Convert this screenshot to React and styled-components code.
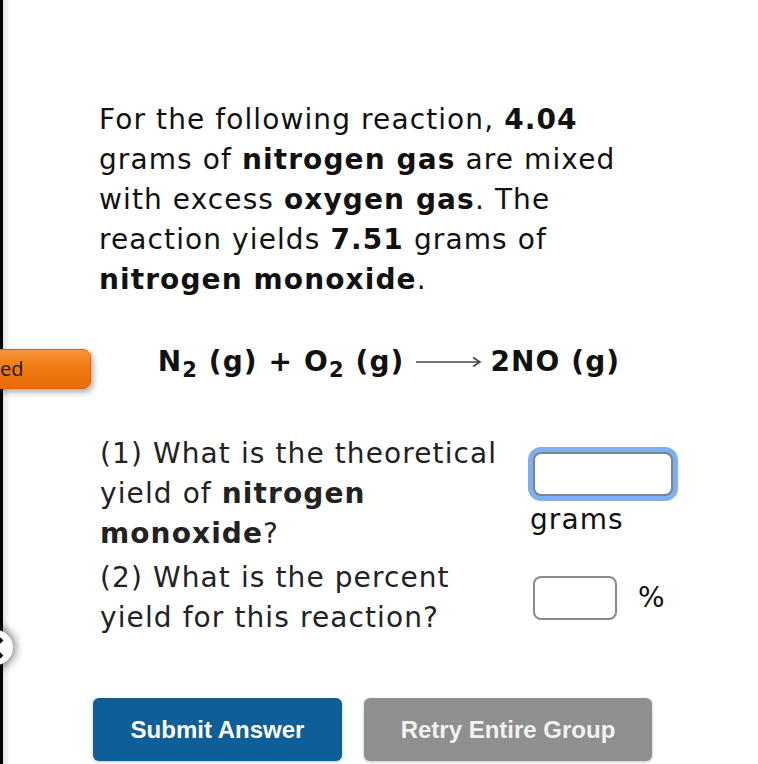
import React from "react";
import styled, { createGlobalStyle } from "styled-components";

const Global = createGlobalStyle`
  html, body { margin: 0; padding: 0; background: #fff; }
  body { font-family: "DejaVu Sans", Verdana, sans-serif; color: #111; }
`;

const Page = styled.div`
  position: relative;
  display: flex;
  width: 758px;
  height: 764px;
  overflow: hidden;
  background: #fff;
`;

const Rail = styled.div`
  flex: 0 0 10px;
  box-sizing: border-box;
  border-left: 3px solid #000;
  background: linear-gradient(to right, #e4e4e4, #f3f3f3 60%, #fff);
`;

const Content = styled.main`
  flex: 0 0 600px;
  padding: 100px 0 0 89px;
`;

const textBase = `
  font-size: 28px;
  line-height: 40px;
  letter-spacing: 1.1px;
`;

const Prose = styled.p`
  margin: 0;
  width: 535px;
  ${textBase}
  color: #111;
  b { font-weight: bold; }
`;

const Equation = styled.div`
  margin-top: 42px;
  width: 580px;
  text-align: center;
  ${textBase}
  font-weight: bold;
  color: #111;
  sub {
    font-size: 21px;
    line-height: 0;
    vertical-align: -6px;
  }
`;

const Arrow = styled.svg`
  display: inline-block;
  width: 66px;
  height: 14px;
  margin: 0 8px 0 12px;
  vertical-align: 2px;
`;

const Questions = styled.section`
  margin-top: 52px;
  display: grid;
  grid-template-columns: 428px auto;
  column-gap: 6px;
  row-gap: 4px;
`;

const Label = styled.div`
  ${textBase}
  color: #222;
  padding-left: 1px;
`;

const Answer = styled.div`
  align-self: start;
  padding-top: 18px;
  display: flex;
  flex-direction: ${(p) => (p.$stack ? "column" : "row")};
  align-items: ${(p) => (p.$stack ? "flex-start" : "center")};
  gap: ${(p) => (p.$stack ? "4px" : "21px")};
  ${textBase}
  color: #111;
`;

const Field = styled.input`
  box-sizing: border-box;
  width: ${(p) => p.$w}px;
  height: 44px;
  margin: 0;
  border: 2px solid #8a8a8a;
  border-radius: 8px;
  background: #fff;
  outline: none;
  box-shadow: ${(p) => (p.$focus ? "0 0 0 5px #7eaff0" : "none")};
  border-color: ${(p) => (p.$focus ? "#7b8290" : "#8a8a8a")};
`;

const Unit = styled.span`
  margin-left: ${(p) => p.$pad || 0}px;
`;

const Actions = styled.div`
  margin: 60px 0 0 -6px;
  display: flex;
  gap: 22px;
`;

const Button = styled.button`
  width: ${(p) => p.$w}px;
  height: 63px;
  border: none;
  border-radius: 6px;
  background: ${(p) => p.$bg};
  color: ${(p) => p.$fg};
  font-family: "Liberation Sans", Arial, sans-serif;
  font-weight: bold;
  font-size: 24px;
  box-shadow: 0 1px 3px rgba(0, 0, 0, 0.25);
  cursor: pointer;
`;

const Tab = styled.div`
  position: absolute;
  left: -20px;
  top: 349px;
  width: 111px;
  height: 40px;
  box-sizing: border-box;
  padding-left: 19px;
  border: 1px solid #d4620f;
  border-radius: 8px;
  background: linear-gradient(to bottom, #f8953a, #f07a12 45%, #ea6c05);
  box-shadow: 2px 3px 6px rgba(0, 0, 0, 0.35);
  font-family: "Open Sans", Arial, sans-serif;
  font-size: 20px;
  line-height: 38px;
  color: #1a1a1a;
  overflow: hidden;
`;

const RoundButton = styled.div`
  position: absolute;
  left: -22px;
  top: 630px;
  width: 35px;
  height: 35px;
  padding-right: 9px;
  box-sizing: border-box;
  border-radius: 50%;
  background: #fff;
  box-shadow: 0 0 9px 3px rgba(0, 0, 0, 0.45);
  display: flex;
  align-items: center;
  justify-content: flex-end;
`;

export default function App() {
  return (
    <Page>
      <Global />
      <Rail />
      <Content>
        <Prose>
          For the following reaction, <b>4.04</b> grams of <b>nitrogen gas</b> are mixed
          with excess <b>oxygen gas</b>. The reaction yields <b>7.51</b> grams of{" "}
          <b>nitrogen monoxide</b>.
        </Prose>
        <Equation>
          N<sub>2</sub> (g) + O<sub>2</sub> (g)
          <Arrow viewBox="0 0 66 14">
            <path d="M0 7 H63" stroke="#444" strokeWidth="1.6" fill="none" />
            <path d="M57 2.5 L64 7 L57 11.5" stroke="#444" strokeWidth="1.6" fill="none" />
          </Arrow>
          2NO (g)
        </Equation>
        <Questions>
          <Label>
            (1) What is the theoretical yield of <b>nitrogen monoxide</b>?
          </Label>
          <Answer $stack>
            <Field $w={140} $focus aria-label="theoretical yield" />
            <Unit $pad={-3}>grams</Unit>
          </Answer>
          <Label>(2) What is the percent yield for this reaction?</Label>
          <Answer>
            <Field $w={84} aria-label="percent yield" />
            <Unit>%</Unit>
          </Answer>
        </Questions>
        <Actions>
          <Button $w={249} $bg="#0e5f98" $fg="#fff">Submit Answer</Button>
          <Button $w={288} $bg="#8f8f8f" $fg="#f2f2f2">Retry Entire Group</Button>
        </Actions>
      </Content>
      <Tab>ed</Tab>
      <RoundButton>
        <svg width="14" height="24" viewBox="0 0 14 24">
          <path d="M12 3 L3 12 L12 21" stroke="#000" strokeWidth="4" fill="none" />
        </svg>
      </RoundButton>
    </Page>
  );
}
